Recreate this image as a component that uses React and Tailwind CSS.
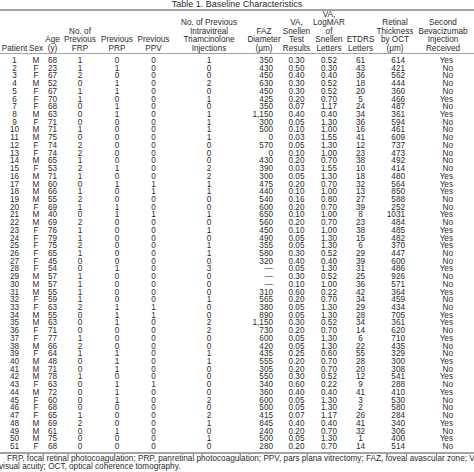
const grid =
  'grid grid-cols-[29px_14px_19px_36px_38px_35px_76px_34px_31px_34px_29px_40px_59px]';

const headers = [
  ['Patient'],
  ['Sex'],
  ['Age', '(y)'],
  ['No. of', 'Previous', 'FRP'],
  ['Previous', 'PRP'],
  ['Previous', 'PPV'],
  ['No. of Previous', 'Intravitreal', 'Triamcinolone', 'Injections'],
  ['FAZ', 'Diameter', '(μm)'],
  ['VA,', 'Snellen', 'Test', 'Results'],
  ['VA,', 'LogMAR', 'of', 'Snellen', 'Letters'],
  ['ETDRS', 'Letters'],
  ['Retinal', 'Thickness', 'by OCT', '(μm)'],
  ['Second', 'Bevacizumab', 'Injection', 'Received'],
];

// per-column alignment of the body cells
const cellAlign = [
  'text-center',
  'text-center',
  'text-center',
  'text-center',
  'text-center',
  'text-center',
  'text-center',
  'text-right pr-[8px]',
  'text-center',
  'text-center',
  'text-center',
  'text-right pr-[10px]',
  'text-right pr-[21px]',
];

const rows = `1 M 68 1 0 0 1 350 0.30 0.52 61 614 Yes
2 F 23 1 1 0 0 430 0.50 0.30 43 421 No
3 F 67 2 0 0 0 450 0.40 0.40 36 562 No
4 M 52 0 1 0 2 630 0.30 0.52 18 444 No
5 F 67 1 1 0 0 450 0.30 0.52 20 360 No
6 F 70 1 0 0 1 425 0.20 0.70 5 466 Yes
7 F 68 0 1 0 0 350 0.07 1.17 24 487 No
8 M 63 0 1 0 1 1,150 0.40 0.40 34 361 Yes
9 F 71 0 0 0 1 300 0.05 1.30 36 594 No
10 M 71 1 0 0 1 500 0.10 1.00 16 461 No
11 M 75 0 0 0 1 0 0.03 1.55 41 609 No
12 F 74 2 0 0 0 570 0.05 1.30 12 737 No
13 F 74 2 0 0 0 0 0.10 1.00 23 473 No
14 M 65 1 0 0 0 430 0.20 0.70 38 492 No
15 F 53 2 1 0 2 390 0.03 1.55 10 414 No
16 M 71 1 0 0 2 300 0.05 1.30 18 480 Yes
17 M 60 0 1 1 1 475 0.20 0.70 32 564 Yes
18 M 66 1 0 1 1 440 0.10 1.00 13 850 Yes
19 M 55 2 0 0 0 540 0.16 0.80 27 588 No
20 F 69 1 1 0 0 600 0.20 0.70 39 252 No
21 M 40 0 1 1 1 650 0.10 1.00 8 1031 Yes
22 M 69 2 0 0 0 560 0.20 0.70 23 484 No
23 F 76 1 0 0 1 450 0.10 1.00 38 485 Yes
24 F 79 1 0 0 0 490 0.05 1.30 15 482 Yes
25 F 75 2 0 0 1 355 0.05 1.30 6 370 Yes
26 F 65 1 0 0 1 580 0.30 0.52 29 447 No
27 F 45 0 0 0 0 320 0.40 0.40 39 600 No
28 F 54 0 1 0 3 — 0.05 1.30 31 486 Yes
29 M 57 1 0 0 0 — 0.30 0.52 25 926 No
30 M 57 1 0 0 0 — 0.10 1.00 36 571 No
31 M 55 1 0 0 0 310 0.60 0.22 42 364 Yes
32 F 59 1 0 0 1 565 0.20 0.70 34 459 No
33 F 63 2 1 1 0 380 0.05 1.30 29 434 No
34 M 55 0 1 1 0 890 0.05 1.30 28 705 Yes
35 M 63 0 1 0 2 1,150 0.30 0.52 34 361 Yes
36 F 71 0 0 0 2 730 0.20 0.70 14 620 No
37 F 77 1 0 0 0 600 0.05 1.30 6 710 Yes
38 M 66 2 0 0 0 420 0.05 1.30 22 435 No
39 F 64 1 1 0 1 435 0.25 0.60 55 329 No
40 M 48 0 1 0 1 555 0.20 0.70 28 300 Yes
41 M 71 0 1 0 0 305 0.20 0.70 20 308 No
42 M 78 1 0 0 0 550 0.30 0.52 12 541 Yes
43 F 63 0 1 1 0 340 0.60 0.22 9 288 No
44 M 72 0 1 0 0 360 0.40 0.40 41 410 Yes
45 F 60 0 1 0 2 600 0.05 1.30 3 530 No
46 F 68 0 0 0 0 500 0.05 1.30 2 580 No
47 F 65 1 0 0 2 415 0.07 1.17 26 284 No
48 M 69 2 0 0 1 845 0.40 0.40 41 340 Yes
49 M 61 0 1 0 0 240 0.20 0.70 32 306 No
50 M 75 0 0 0 1 500 0.05 1.30 1 400 Yes
51 F 68 0 0 0 0 280 0.20 0.70 14 514 No`
  .split('\n')
  .map((line) => line.split(' '));

function App() {
  return (
    <div className="h-[472px] w-[474px] overflow-hidden bg-white font-['Liberation_Sans',Arial,sans-serif] text-[8.2px] text-[#2b2b2b]">
      {/* Title */}
      <div className="-mt-[1px] h-[10px] text-center text-[9px] leading-[10px] whitespace-nowrap">
        Table 1. Baseline Characteristics
      </div>

      {/* Header */}
      <div className={`${grid} h-[45px] items-end border-t-2 border-b border-[#a3a3a3] leading-[8.4px]`}>
        {headers.map((lines, i) => (
          <div
            key={i}
            className={`text-center whitespace-nowrap ${i === 12 ? 'pr-[3px]' : ''}`}
          >
            {lines.map((l) => (
              <div key={l}>{l}</div>
            ))}
          </div>
        ))}
      </div>

      {/* Body */}
      <div className="border-b-2 border-[#a3a3a3] pt-[3px] pb-[1.3px]">
        {rows.map((r) => (
          <div key={r[0]} className={`${grid} h-[7.72px] leading-[7.72px]`}>
            {r.map((v, j) => (
              <div key={j} className={`whitespace-nowrap ${cellAlign[j]}`}>
                {v}
              </div>
            ))}
          </div>
        ))}
      </div>

      {/* Footnote */}
      <div className="-ml-[1px] pt-[1px] leading-[8px] whitespace-nowrap">
        <div className="pl-[8px]">
          FRP, focal retinal photocoagulation; PRP, panretinal photocoagulation; PPV, pars plana
          vitrectomy; FAZ, foveal avascular zone; VA,
        </div>
        <div>visual acuity; OCT, optical coherence tomography.</div>
      </div>
    </div>
  );
}

export default App;
